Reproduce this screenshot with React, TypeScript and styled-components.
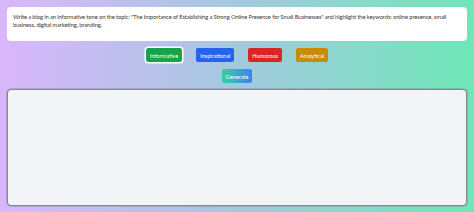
import React, { useState } from 'react';
import styled, { createGlobalStyle } from 'styled-components';

const GlobalStyle = createGlobalStyle`
  html, body {
    margin: 0;
    padding: 0;
  }
  body {
    font-family: 'Lato', 'Open Sans', Arial, sans-serif;
  }
`;

const Page = styled.div`
  width: 474px;
  height: 212px;
  box-sizing: border-box;
  padding: 7px;
  display: flex;
  flex-direction: column;
  align-items: stretch;
  background: linear-gradient(90deg, #dab6fc 0%, #a9c6e2 45%, #6ee7b7 100%);
`;

const PromptCard = styled.div`
  box-sizing: border-box;
  height: 34px;
  padding: 6px 4px 6px 6px;
  background: #ffffff;
  border-radius: 4px;
  color: #3a3a3a;
  font-size: 5.85px;
  letter-spacing: -0.13px;
  line-height: 8px;
`;

const ToneRow = styled.div`
  display: flex;
  justify-content: center;
  gap: 12px;
  margin-top: 6px;
`;

const ToneButton = styled.button<{ color: string; active: boolean }>`
  box-sizing: border-box;
  height: 16px;
  padding: 0 4px;
  border: 1px solid ${(p) => (p.active ? '#ffffff' : 'transparent')};
  border-radius: 3px;
  background: ${(p) => p.color};
  background-clip: padding-box;
  color: #ffffff;
  font-family: 'Lato', 'Open Sans', sans-serif;
  font-size: 5.6px;
  cursor: pointer;
  box-shadow: ${(p) => (p.active ? '0 0 0 0.5px #ffffff' : 'none')};
`;

const GenerateRow = styled.div`
  display: flex;
  justify-content: center;
  margin-top: 6px;
`;

const GenerateButton = styled.button`
  box-sizing: border-box;
  height: 14px;
  width: 30px;
  padding: 0;
  border: none;
  border-radius: 2px;
  background: linear-gradient(90deg, #34d399, #3b82f6);
  color: #ffffff;
  font-family: 'Lato', 'Open Sans', sans-serif;
  font-size: 5.6px;
  cursor: pointer;
`;

const Output = styled.div`
  flex: 1;
  margin-top: 6px;
  margin-bottom: -1px;
  background: #f3f4f6;
  border: 1px solid #858a94;
  border-radius: 4px;
  box-shadow: 0 0 0 0.6px rgba(120, 125, 135, 0.7);
`;

const TONES = [
  { name: 'Informative', color: '#16a34a' },
  { name: 'Inspirational', color: '#2563eb' },
  { name: 'Humorous', color: '#dc2626' },
  { name: 'Analytical', color: '#ca8a04' },
];

const App: React.FC = () => {
  const [tone, setTone] = useState('Informative');
  const prompt = `Write a blog in an ${tone.toLowerCase()} tone on the topic: "The Importance of Establishing a Strong Online Presence for Small Businesses" and highlight the keywords: online presence, small business, digital marketing, branding.`;

  return (
    <>
      <GlobalStyle />
      <Page>
        <PromptCard>{prompt}</PromptCard>
        <ToneRow>
          {TONES.map((t) => (
            <ToneButton key={t.name} color={t.color} active={tone === t.name} onClick={() => setTone(t.name)}>
              {t.name}
            </ToneButton>
          ))}
        </ToneRow>
        <GenerateRow>
          <GenerateButton>Generate</GenerateButton>
        </GenerateRow>
        <Output />
      </Page>
    </>
  );
};

export default App;
